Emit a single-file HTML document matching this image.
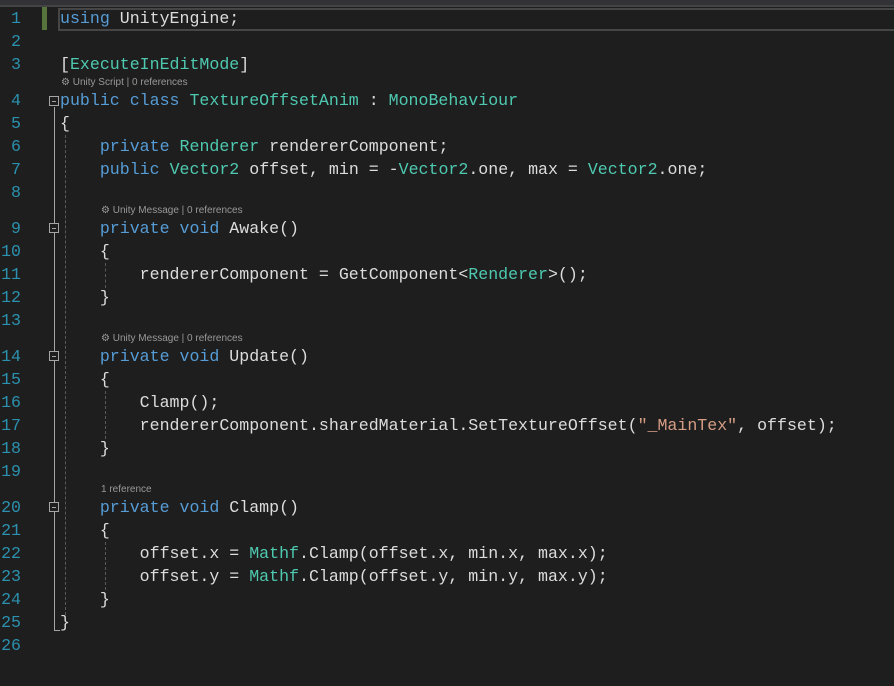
<!DOCTYPE html>
<html><head><style>
body{margin:0;width:894px;height:686px;background:#1e1e1e;overflow:hidden;position:relative;font-family:"Liberation Mono",monospace;font-size:16.6px;color:#dcdcdc}
.l{position:absolute;left:60px;height:23px;line-height:23px;white-space:pre;margin-top:1px}
.n{position:absolute;left:0;width:21px;text-align:right;height:23px;line-height:23px;color:#2b91af;white-space:pre;margin-top:1px}
.c{position:absolute;font-family:"Liberation Sans",sans-serif;font-size:10px;color:#999;height:12px;line-height:12px;white-space:pre;margin-top:1px}
.k{color:#569cd6}.t{color:#4ec9b0}.s{color:#d69d85}
.box{position:absolute;left:49px;width:8px;height:8px;border:1px solid #a5a5a5;background:#1e1e1e}
.box:after{content:"";position:absolute;left:2px;top:3.5px;width:4px;height:1px;background:#a5a5a5}
.v{position:absolute;width:1px;background:#a5a5a5}
.g{position:absolute;width:0;border-left:1px dashed #5a5a5a}
</style></head><body>
<div style="position:absolute;left:0;top:0;width:894px;height:5px;background:#333337"></div>
<div style="position:absolute;left:0;top:5px;width:894px;height:2px;background:#434346"></div>
<div style="position:absolute;left:58px;top:8px;width:840px;height:19px;border:2px solid #464646;border-right:none"></div>
<div style="position:absolute;left:42px;top:7px;width:5px;height:23px;background:#57743c"></div>

<div class="v" style="left:54px;top:107px;height:524px"></div>
<div class="v" style="left:54px;top:630px;width:6px;height:1px"></div>
<div class="g" style="left:65px;top:135px;height:480px"></div>
<div class="g" style="left:105px;top:263px;height:25px"></div>
<div class="g" style="left:105px;top:391px;height:48px"></div>
<div class="g" style="left:105px;top:542px;height:48px"></div>
<div class="box" style="top:96px"></div>
<div class="box" style="top:223px"></div>
<div class="box" style="top:351px"></div>
<div class="box" style="top:502px"></div>

<div class="n" style="top:6px">1</div><div class="l" style="top:6px"><span class="k">using</span> UnityEngine;</div>
<div class="n" style="top:29px">2</div>
<div class="n" style="top:52px">3</div><div class="l" style="top:52px">[<span class="t">ExecuteInEditMode</span>]</div>
<div class="c" style="left:61px;top:76px">⚙ Unity Script | 0 references</div>
<div class="n" style="top:88px">4</div><div class="l" style="top:88px"><span class="k">public class</span> <span class="t">TextureOffsetAnim</span> : <span class="t">MonoBehaviour</span></div>
<div class="n" style="top:111px">5</div><div class="l" style="top:111px">{</div>
<div class="n" style="top:134px">6</div><div class="l" style="top:134px">    <span class="k">private</span> <span class="t">Renderer</span> rendererComponent;</div>
<div class="n" style="top:157px">7</div><div class="l" style="top:157px">    <span class="k">public</span> <span class="t">Vector2</span> offset, min = -<span class="t">Vector2</span>.one, max = <span class="t">Vector2</span>.one;</div>
<div class="n" style="top:180px">8</div>
<div class="c" style="left:101px;top:204px">⚙ Unity Message | 0 references</div>
<div class="n" style="top:216px">9</div><div class="l" style="top:216px">    <span class="k">private void</span> Awake()</div>
<div class="n" style="top:239px">10</div><div class="l" style="top:239px">    {</div>
<div class="n" style="top:262px">11</div><div class="l" style="top:262px">        rendererComponent = GetComponent&lt;<span class="t">Renderer</span>&gt;();</div>
<div class="n" style="top:285px">12</div><div class="l" style="top:285px">    }</div>
<div class="n" style="top:308px">13</div>
<div class="c" style="left:101px;top:332px">⚙ Unity Message | 0 references</div>
<div class="n" style="top:344px">14</div><div class="l" style="top:344px">    <span class="k">private void</span> Update()</div>
<div class="n" style="top:367px">15</div><div class="l" style="top:367px">    {</div>
<div class="n" style="top:390px">16</div><div class="l" style="top:390px">        Clamp();</div>
<div class="n" style="top:413px">17</div><div class="l" style="top:413px">        rendererComponent.sharedMaterial.SetTextureOffset(<span class="s">"_MainTex"</span>, offset);</div>
<div class="n" style="top:436px">18</div><div class="l" style="top:436px">    }</div>
<div class="n" style="top:459px">19</div>
<div class="c" style="left:101px;top:483px">1 reference</div>
<div class="n" style="top:495px">20</div><div class="l" style="top:495px">    <span class="k">private void</span> Clamp()</div>
<div class="n" style="top:518px">21</div><div class="l" style="top:518px">    {</div>
<div class="n" style="top:541px">22</div><div class="l" style="top:541px">        offset.x = <span class="t">Mathf</span>.Clamp(offset.x, min.x, max.x);</div>
<div class="n" style="top:564px">23</div><div class="l" style="top:564px">        offset.y = <span class="t">Mathf</span>.Clamp(offset.y, min.y, max.y);</div>
<div class="n" style="top:587px">24</div><div class="l" style="top:587px">    }</div>
<div class="n" style="top:610px">25</div><div class="l" style="top:610px">}</div>
<div class="n" style="top:633px">26</div>
</body></html>
